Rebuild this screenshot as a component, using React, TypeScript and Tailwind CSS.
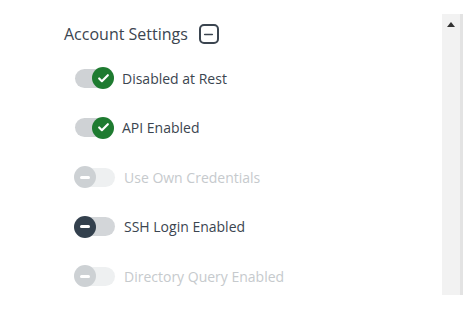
import { Check, Minus } from "lucide-react"

type Row = { label: string; state: "on" | "off" | "disabled" }

const rows: Row[] = [
  { label: "Disabled at Rest", state: "on" },
  { label: "API Enabled", state: "on" },
  { label: "Use Own Credentials", state: "disabled" },
  { label: "SSH Login Enabled", state: "off" },
  { label: "Directory Query Enabled", state: "disabled" },
]

function Toggle({ state }: { state: Row["state"] }) {
  if (state === "on") {
    return (
      <div className="relative h-[19px] w-[38px] rounded-full bg-[#cfd2d5]">
        <div className="absolute -right-[1px] -top-[1.5px] flex h-[22px] w-[22px] items-center justify-center rounded-full bg-[#1e7b30]">
          <Check size={13} strokeWidth={4} className="text-white" />
        </div>
      </div>
    )
  }
  const dark = state === "off"
  return (
    <div className={`relative h-[19px] w-[40px] rounded-full ${dark ? "bg-[#d3d6d9]" : "bg-[#eef0f1]"}`}>
      <div
        className={`absolute -left-[1px] -top-[1.5px] flex h-[22px] w-[22px] items-center justify-center rounded-full ${
          dark ? "bg-[#33404d]" : "bg-[#cdd1d4]"
        }`}
      >
        <div className="h-[3px] w-[10px] rounded-sm bg-white" />
      </div>
    </div>
  )
}

export default function App() {
  return (
    <div className="flex h-[315px] w-[474px] bg-white font-['Open_Sans',sans-serif]">
      <div className="flex-1 pl-[64px] pt-[22px]">
        <div className="flex items-center gap-[11px]">
          <h2 className="text-[16px] text-[#3b4550]">Account Settings</h2>
          <div className="flex h-[20px] w-[20px] items-center justify-center rounded-[5px] border-2 border-[#3b4550]">
            <Minus size={13} strokeWidth={3} className="text-[#3b4550]" />
          </div>
        </div>
        <div className="mt-[23px] flex flex-col gap-[31.5px] pl-[11px]">
          {rows.map((r) => (
            <div key={r.label} className="flex h-[18px] items-center gap-[9px]">
              <Toggle state={r.state} />
              <span
                className={`text-[14px] ${r.state === "disabled" ? "text-[#c6cacd]" : "text-[#3b4550]"}`}
              >
                {r.label}
              </span>
            </div>
          ))}
        </div>
      </div>
      <div className="mr-[11px] mt-[14px] flex h-[281px] w-[21px]">
        <div className="flex w-[18px] justify-center bg-[#f2f2f2] pt-[8px]">
          <div className="h-0 w-0 border-x-[4px] border-b-[5px] border-x-transparent border-b-[#333]" />
        </div>
        <div className="w-[3px] bg-[#e3e3e3]" />
      </div>
    </div>
  )
}
